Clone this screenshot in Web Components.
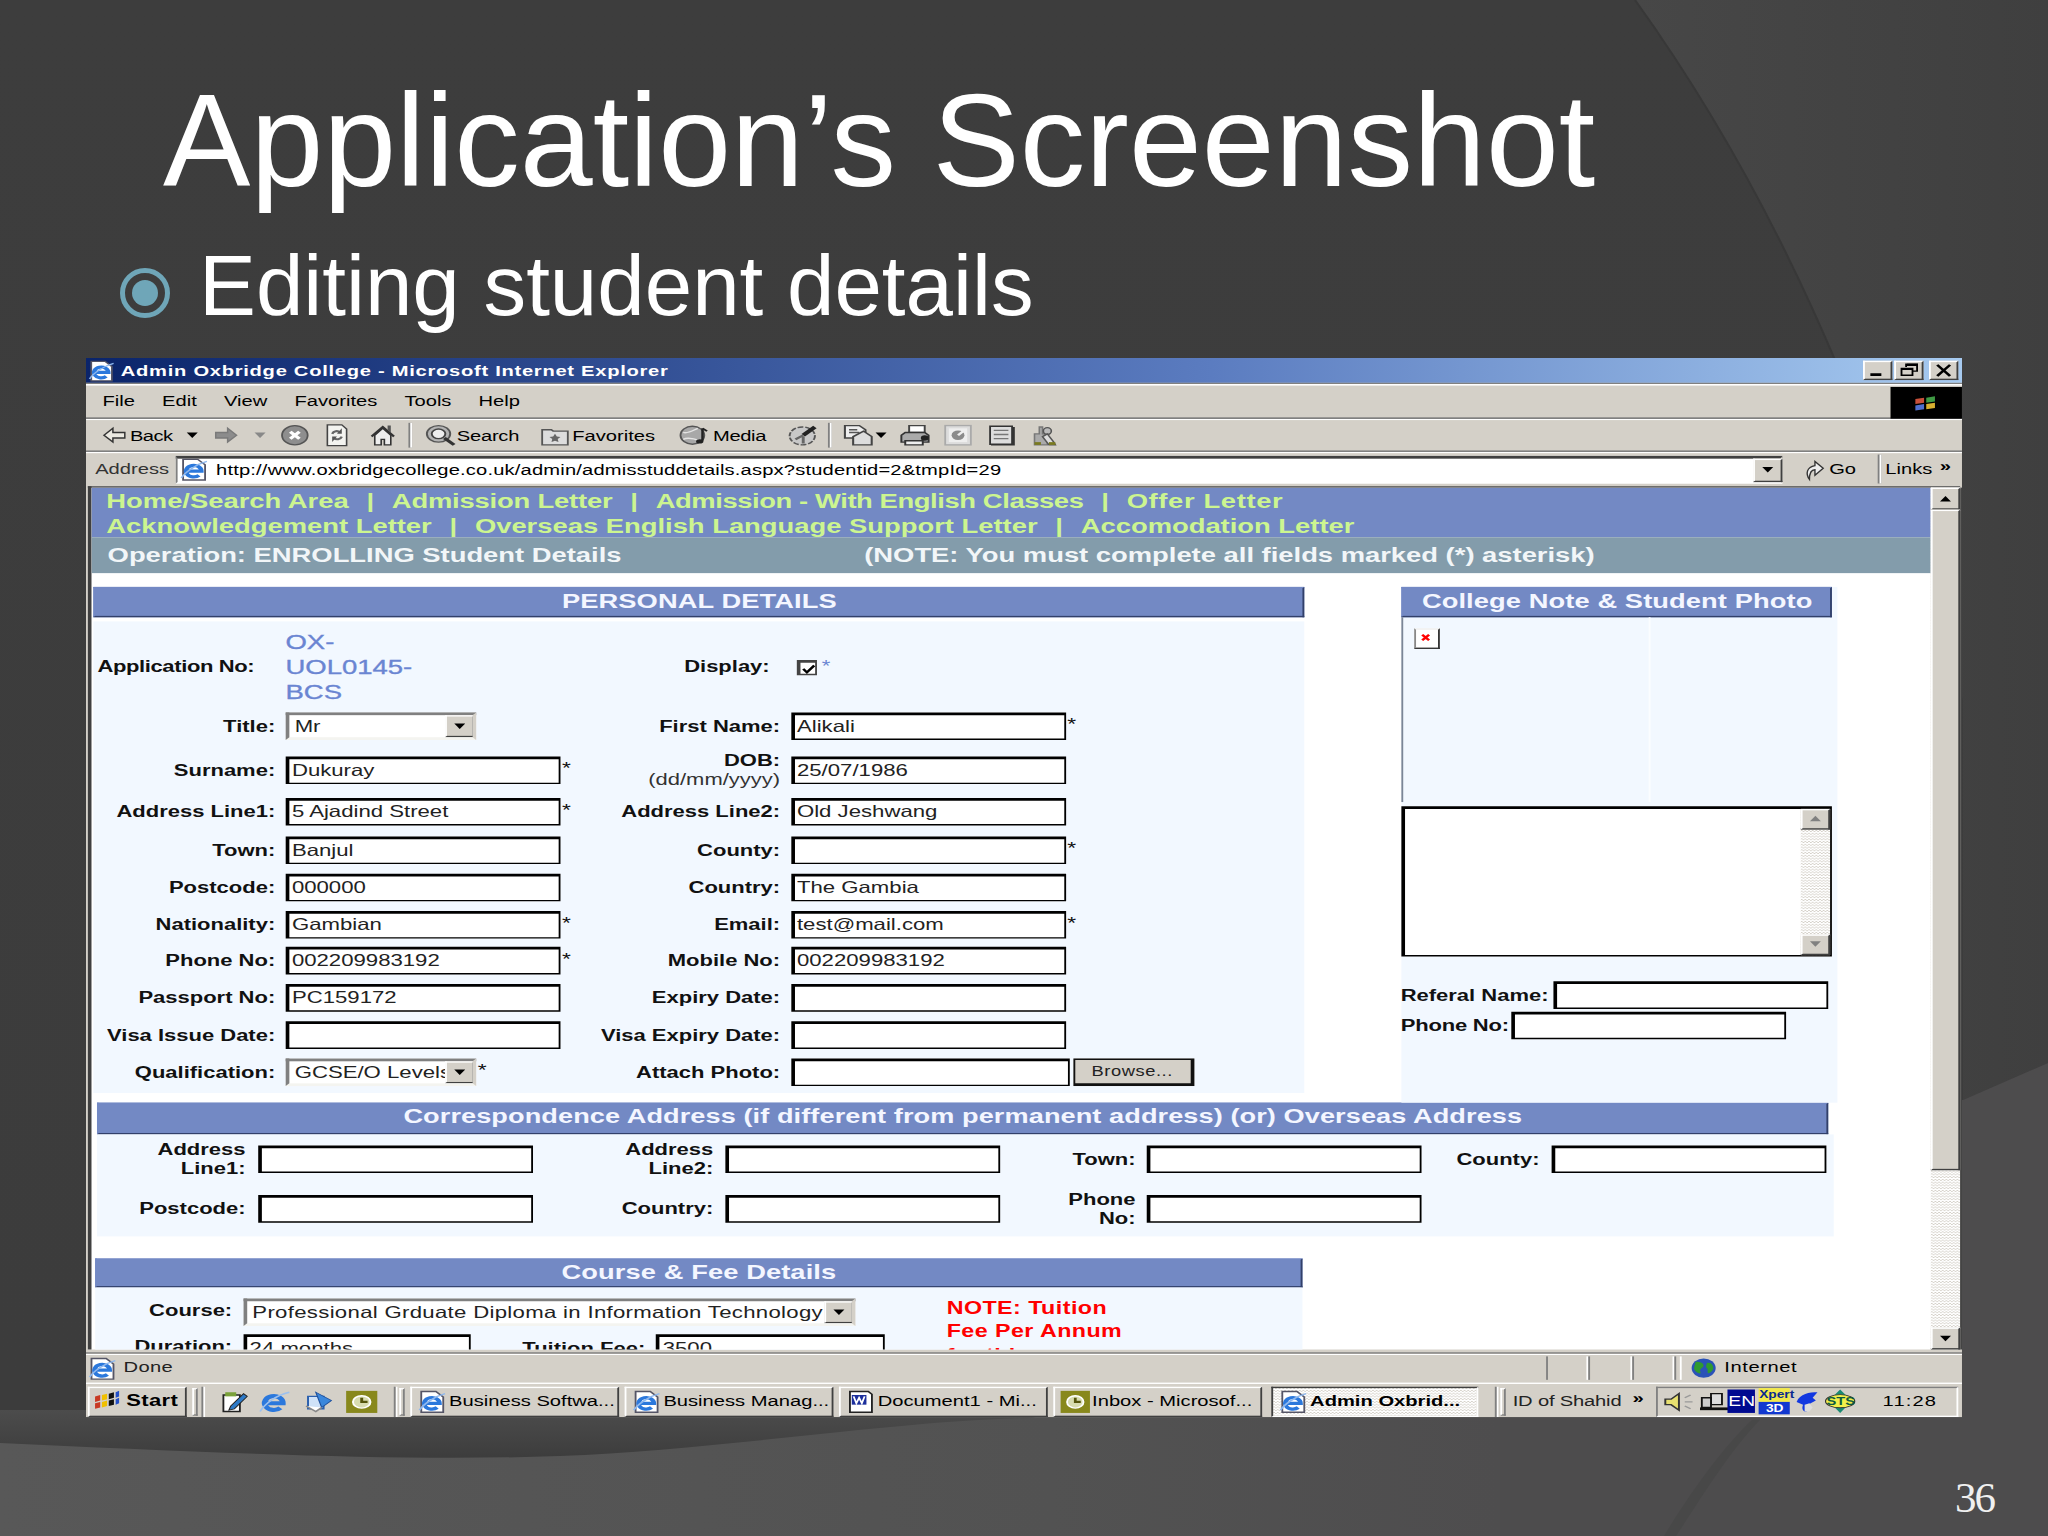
<!DOCTYPE html>
<html lang="en">
<head>
<meta charset="utf-8">
<title>Application's Screenshot</title>
<style>
html, body { margin: 0; padding: 0; width: 2048px; height: 1536px; overflow: hidden; background: #3e3e3e; }
</style>
</head>
<body>
<app-slide>
  <span slot="heading">Application’s Screenshot</span>
  <span slot="bullet">Editing student details</span>
  <span slot="page">36</span>
  <ie-window>
    <admin-form></admin-form>
  </ie-window>
</app-slide>

<script>
const ICONS = {
  page: `<path d="M2 .5h8l4 4v11H2z" fill="#fff" stroke="#556"/>`,
  ie: `<path d="M3.500 9h8.500a4.200 4.200 0 1 0-1.300 3.100" fill="none" stroke="#2b78dc" stroke-width="2.400"/><path d="M1 14C3 10 9 4 15 2" fill="none" stroke="#8fb8ee" stroke-width="1"/>`,
  back: `<path d="M1 8l6-5v3h8v4H7v3z" fill="#ebe9e1" stroke="#333"/>`,
  forward: `<path d="M15 8L9 3v3H1v4h8v3z" fill="#8c8c8c" stroke="#7a7a7a"/>`,
  stop: `<circle cx="8" cy="8" r="7" fill="#8e8e8e" stroke="#555"/><path d="M5.500 5.500l5 5m0-5l-5 5" stroke="#fff" stroke-width="2"/>`,
  refresh: `<path d="M2 .5h9l3 3v12H2z" fill="#f4f4f0" stroke="#444"/><path d="M5 7a3 3 0 0 1 5-1M11 9a3 3 0 0 1-5 1" stroke="#666" stroke-width="1.500" fill="none"/><path d="M11 3v4H8zM5 13V9h3z" fill="#555"/>`,
  home: `<path d="M3 8v7h4v-4h2v4h4V8L8 3z" fill="#eee" stroke="#333"/><path d="M1 9l7-7 7 7" stroke="#333" fill="none" stroke-width="1.500"/><path d="M11 1h2v5l-2-2z" fill="#555"/>`,
  search: `<circle cx="7" cy="7" r="6" fill="#b4b4b4" stroke="#555"/><circle cx="7" cy="7" r="3.500" fill="#eee" stroke="#444"/><path d="M10 10l5 5" stroke="#333" stroke-width="2"/>`,
  fav: `<path d="M1 4h5l1 1h8v10H1z" fill="#ddd" stroke="#555"/><path d="M8 7l1 2 2 .3-1.500 1.500.4 2.200L8 12l-1.900 1 .4-2.200L5 9.300 7 9z" fill="#666"/>`,
  media: `<circle cx="7" cy="8" r="6.500" fill="#a8a8a8" stroke="#555"/><path d="M2 6c3 1 6-2 8-3M2 11c3-2 7 0 9 1" stroke="#e4e4e4" fill="none"/><path d="M12.500 3v9M12.500 3l2.500 2" stroke="#222" stroke-width="1.300"/><ellipse cx="11" cy="12.500" rx="2" ry="1.500" fill="#222"/>`,
  history: `<circle cx="7.500" cy="8.500" r="6.500" fill="#c8c8c8" stroke="#555" stroke-dasharray="3 1"/><path d="M8 8l6-6" stroke="#222" stroke-width="2.500"/><path d="M8 8l-4 3M8 9v5" stroke="#666" stroke-width="1.500"/>`,
  mail: `<path d="M2 1h7l3 3v6H2z" fill="#eee" stroke="#444"/><path d="M4 4h4M4 6h5" stroke="#555"/><path d="M6 9l5-4 4 4v6H6z" fill="#ddd" stroke="#444"/>`,
  print: `<path d="M5 1h8v5H5z" fill="#fff" stroke="#444"/><path d="M1 8l2-2h10l2 2v5H1z" fill="#aaa" stroke="#333"/><path d="M3 12h9v3H3z" fill="#eee" stroke="#333"/><circle cx="13" cy="10" r="2" fill="#222"/>`,
  edit: `<rect x="1" y="1" width="14" height="14" fill="#dcdcdc" stroke="#aaa"/><rect x="3" y="3" width="10" height="10" fill="#eee"/><circle cx="8" cy="8" r="3.500" fill="#8a8a8a"/><path d="M8 8l3-3" stroke="#eee" stroke-width="1.500"/>`,
  discuss: `<path d="M1.500 1.500h12v13h-12z" fill="#ddd" stroke="#333"/><path d="M3.500 4.500h8M3.500 7.500h8M3.500 10.500h8" stroke="#777"/><path d="M14.500 2v13H2" stroke="#333" fill="none"/>`,
  messenger: `<path d="M2 15V7h3V2h2v5h3v8z" fill="#aaa" stroke="#777"/><circle cx="10" cy="5" r="2.500" fill="#bbb" stroke="#555"/><path d="M7 9l3-2 4 6 1 2h-4z" fill="#ddd" stroke="#555"/><path d="M2 14h4" stroke="#7a7a20" stroke-width="2"/><path d="M11 14h4" stroke="#7a7a20" stroke-width="2"/>`,
  go: `<path d="M5 15C2 11 3 6 9 5V2l6 5-6 5V8C6 8 5 11 5 15z" fill="#eee" stroke="#333"/>`,
  globe: `<circle cx="8" cy="8" r="7.500" fill="#2a52b8"/><path d="M3 3c3 0 5 1 5 3S5 8 6 11s-4 0-4-3zM10 4c3-1 4 2 4 4s-2 4-3 4 0-3-1-4 0-3 0-4z" fill="#2f9a2f"/>`,
  flag: `<path d="M1 4l3-1v4l-3 1zM1 9l3-1v4l-3 1z" fill="#c83a24"/><path d="M5 3l3-1v4L5 7zM5 8l3-1v4l-3 1z" fill="#f0c000"/><path d="M9 2l3-1v4L9 6zM9 7l3-1v4l-3 1z" fill="#111"/><path d="M13 1l2-1v4l-2 1zM13 6l2-1v4l-2 1z" fill="#2450c8"/>`,
  msflag: `<path d="M3 5l4-1v4l-4 1z" fill="#c8503a"/><path d="M8 4l4-1v4L8 8z" fill="#3f9a44"/><path d="M3 10l4-1v4l-4 1z" fill="#4f6fd0"/><path d="M8 9l4-1v4l-4 1z" fill="#d8b030"/>`,
  quick: `<path d="M2 3h9v12H2z" fill="#fff" stroke="#222"/><path d="M6 11l7-9 2 2-7 9-3 1z" fill="#2d7ac8" stroke="#222" stroke-width=".6"/><path d="M3 1h6v3H3z" fill="#7aa23a"/>`,
  bare_ie: `<path d="M2.500 9h10a5 5 0 1 0-1.400 3.300" fill="none" stroke="#2b78dc" stroke-width="3"/><path d="M0 15C3 9 9 3 16 1" fill="none" stroke="#9cc0ee"/>`,
  desk: `<path d="M3 4h8v9H3z" fill="#cfe2f8" stroke="#2a5fae"/><path d="M7 1l8 6-5 5z" fill="#3a87dc" stroke="#1d4f9c" stroke-width=".6"/><path d="M2 11l5 4 3-3" fill="#fff" stroke="#888"/>`,
  outlook: `<rect width="16" height="16" fill="#88881c"/><circle cx="8" cy="8" r="4.500" fill="#d8dcb0" stroke="#fff"/><path d="M8 5v3h3" stroke="#55550c" fill="none" stroke-width="1.500"/>`,
  word: `<path d="M2 .5h10l2 2v13H2z" fill="#fff" stroke="#222"/><rect x="3" y="3" width="8" height="7" fill="#1c2f9c"/><path d="M4 4l1.500 5L7 5l1.500 4L10 4" stroke="#fff" fill="none"/>`,
  speaker: `<path d="M1 6h3l4-4v12l-4-4H1z" fill="#e8e070" stroke="#333"/><path d="M11 5l3-2M11 8h4M11 11l3 2" stroke="#999"/>`,
  network: `<path d="M6 2h6v8H6z" fill="#ddd" stroke="#111"/><path d="M1 5h5v7H1z" fill="#ccc" stroke="#111"/><path d="M0 13h16" stroke="#111" stroke-width="2"/>`,
  bluebird: `<path d="M2 8c2-6 8-7 13-7l-3 4 2 2-5 3c1 2 1 4-1 5-2 0-3-2-2-5z" fill="#1238e0"/><path d="M7 10l3-1 2 3-2 3H7z" fill="#ddd"/>`,
  stars: `<path d="M8 0l3 4H5zM8 16l-3-4h6z" fill="#1a8a72"/><ellipse cx="8" cy="8" rx="7.500" ry="4.500" fill="#f2f04a" stroke="#333" stroke-width=".6"/>`,
  broken: `<path d="M4.500 4.500l5 5m0-5l-5 5" stroke="#f00" stroke-width="2"/>`
};

// small helper, every element below is the same shadow root + template routine
function define(tag, css, html) {
  const template = document.createElement('template');
  template.innerHTML = `<style>${css}</style>${html}`;
  customElements.define(tag, class extends HTMLElement {
    constructor() {
      super();
      this.attachShadow({mode: 'open'});
      this.shadowRoot.appendChild(template.content.cloneNode(true));
    }
    connectedCallback() {
      const name = this.getAttribute('name');
      const svg = this.shadowRoot.querySelector('svg[data-icon]');
      if (svg && name) svg.innerHTML = ICONS[name];
      const w = this.getAttribute('w');
      if (w) this.style.width = w + 'px';
      const x = this.getAttribute('x');
      if (x) this.style.marginLeft = x + 'px';
    }
  });
}

define('x-icon', `
  :host { display: inline-block; width: 16px; height: 16px; flex: none; }
  svg { display: block; width: 100%; height: 100%; overflow: visible; }
`, `<svg data-icon viewBox="0 0 16 16" preserveAspectRatio="none"></svg>`);

define('ie-glyph', `
  :host { display: inline-block; width: 16px; height: 16px; flex: none; position: relative; }
  x-icon { position: absolute; inset: 0; width: 100%; height: 100%; }
`, `<x-icon name="page"></x-icon><x-icon name="ie"></x-icon>`);

define('down-arrow', `
  :host { display: inline-block; flex: none; width: 0; height: 0; border: 3.500px solid transparent; border-top: 4px solid #000; border-bottom: 0; }
`, ``);

define('app-slide', `
  :host {
    display: flex; flex-direction: column; position: relative; width: 2048px; height: 1536px; overflow: hidden;
    font-family: "Liberation Sans", Arial, sans-serif; color: #fff;
    background: linear-gradient(#3d3d3d, #3c3c3c 90%, #3c3c3c);
  }
  .decor { position: absolute; inset: 0; width: 2048px; height: 1536px; }
  header { position: relative; padding: 75px 0 0 163px; font-size: 131px; line-height: 131px; white-space: nowrap; }
  .bullet { position: relative; display: flex; align-items: center; gap: 29px; padding: 35.500px 0 28.500px 120px; font-size: 85.300px; line-height: 88px; white-space: nowrap; }
  .bullet svg { width: 50px; height: 50px; margin-top: 14px; flex: none; }
  .body { position: relative; padding-left: 86px; }
  footer { position: relative; margin-top: 59px; padding-right: 54px; text-align: right; font: 43px/43px "Liberation Serif", "Times New Roman", serif; letter-spacing: -2px; color: #f0f0f0; }
`, `
  <svg class="decor" viewBox="0 0 2048 1536">
    <defs>
      <linearGradient id="tr" x1="0" x2="1" y1="0" y2="0"><stop offset="0" stop-color="#474747"/><stop offset="1" stop-color="#3f3f3f"/></linearGradient>
      <linearGradient id="bt" x1="0" x2="1" y1="0" y2="0"><stop offset="0" stop-color="#585858"/><stop offset=".7" stop-color="#525252"/><stop offset="1" stop-color="#4e4d4e"/></linearGradient>
      <linearGradient id="sh" x1="0" x2="0" y1="0" y2="1"><stop offset="0" stop-color="#4c4c4c"/><stop offset="1" stop-color="#3a3a3a"/></linearGradient>
    </defs>
    <path d="M1635 0Q1750 160 1835 360L1963 700V1100L2048 1063V0z" fill="url(#tr)"/>
    <path d="M1635 0Q1750 160 1835 360" fill="none" stroke="#383838" stroke-width="2"/>
    <rect x="0" y="1410" width="1100" height="56" fill="url(#sh)"/>
    <path d="M1963 1100L2048 1063V1536H1500V1100z" fill="#4d4c4d"/>
    <path d="M0 1443C200 1452 400 1462 560 1456C720 1450 900 1420 1032 1418L1500 1300V1536H0z" fill="url(#bt)"/>
    <path d="M1760 1420C1730 1450 1700 1500 1676 1536H1664C1692 1490 1725 1445 1752 1420z" fill="#484848"/>
  </svg>
  <header><slot name="heading"></slot></header>
  <div class="bullet">
    <svg viewBox="0 0 50 50"><circle cx="25" cy="25" r="22.500" fill="none" stroke="#6fa6b8" stroke-width="5"/><circle cx="25" cy="25" r="13" fill="#6fa6b8"/></svg>
    <span><slot name="bullet"></slot></span>
  </div>
  <div class="body"><slot></slot></div>
  <footer><slot name="page"></slot></footer>
`);

define('tool-button', `
  :host { display: inline-flex; align-items: center; gap: 2px; flex: none; font-size: 11px; color: #000; }
`, `<slot></slot>`);

define('ie-window', `
  :host {
    display: block; width: 1024px; height: 768px; margin-bottom: 291px;
    transform: scale(1.832, 1.379); transform-origin: 0 0;
    background: #d4d0c8; overflow: hidden;
    font: 11px/13px "Liberation Sans", Arial, sans-serif; color: #000;
  }
  .title { height: 18px; display: flex; align-items: center; padding: 0 2px 0 1px; color: #fff; font-weight: bold; letter-spacing: .39px;
    background: linear-gradient(90deg, #0a246a, #5b7cc0 60%, #a6caf0); }
  .title ie-glyph { width: 15px; height: 15px; margin-right: 3px; }
  .title .caption { flex: 1; }
  .winbtn { width: 16px; height: 14px; margin-left: 1px; box-sizing: border-box; background: #d4d0c8;
    border: 1px solid; border-color: #fff #404040 #404040 #fff; }
  .winbtn svg { display: block; width: 100%; height: 100%; }
  .rule { height: 2px; background: linear-gradient(#808080 50%, #fff 50%); }
  .menubar { height: 22px; margin-top: 1px; display: flex; align-items: center; padding-left: 9px; gap: 14.800px; position: relative; }
  .menubar span { margin-bottom: 1px; }
  .menubar .flag { margin-left: auto; width: 39px; height: 23px; background: #000; display: flex; align-items: center; justify-content: center; }
  .menubar .flag x-icon { width: 19px; height: 15px; }
  .toolbar { height: 22px; display: flex; align-items: center; position: relative; }
  .tsep { width: 1px; height: 18px; background: #808080; border-right: 1px solid #fff; flex: none; }
  .address { height: 23px; display: flex; align-items: center; }
  .address .lbl { margin-left: 5px; width: 44px; color: #333; }
  .field { flex: none; width: 877px; height: 20px; box-sizing: border-box; display: flex; align-items: center; background: #fff;
    border: 1px solid; border-color: #404040 #d4d0c8 #fff #808080; border-top-width: 2px; padding-left: 1px; letter-spacing: .09px; white-space: nowrap; }
  .field span { flex: 1; padding-left: 4px; }
  .combo { width: 16px; height: 17px; margin-right: -1px; box-sizing: border-box; background: #d4d0c8; border: 1px solid; border-color: #fff #404040 #404040 #fff;
    display: flex; align-items: center; justify-content: center; }
  .view { height: 626px; display: flex; border-top: 1px solid #404040; border-left: 2px solid #404040; margin-top: 1px; box-sizing: border-box; margin-left: 1px; margin-right: 1px; background: #fff; }
  .view .page { width: 1004px; overflow: hidden; flex: none; }
  .scroll { flex: none; display: flex; flex-direction: column; border-right: 1px solid #404040; box-sizing: border-box; width: 17px;
    background: conic-gradient(#d4d0c8 25%, #fff 0 50%, #d4d0c8 0 75%, #fff 0) 0 0 / 2px 2px; }
  .sbtn { height: 16px; flex: none; box-sizing: border-box; background: #d4d0c8; border: 1px solid; border-color: #fff #404040 #404040 #fff; display: flex; align-items: center; justify-content: center; }
  .up { transform: rotate(180deg); }
  .thumb { height: 479px; box-sizing: border-box; background: #d4d0c8; border: 1px solid; border-color: #fff #404040 #404040 #fff; }
  .sfill { flex: 1; }
  .status { height: 21px; margin-top: 2px; display: flex; align-items: center; border-top: 1px solid #808080; box-shadow: inset 0 1px #fff; letter-spacing: .2px; }
  .status span { margin-bottom: 2px; }
  .status ie-glyph { margin: 0 3.500px 0 1px; }
  .status .done { width: 768px; color: #222; }
  .scell { width: 23.600px; height: 17px; flex: none; border-left: 1px solid #808080; border-right: 1px solid #fff; box-sizing: border-box; }
  .status .zone { display: flex; align-items: center; gap: 4px; margin-left: 5px; letter-spacing: .3px; }
  .status .zone x-icon { width: 14px; height: 15px; }
  .taskbar { height: 26px; display: flex; align-items: center; border-top: 1px solid #fff; box-sizing: border-box; }
  .tbtn { flex: none; height: 22px; box-sizing: border-box; display: flex; align-items: center; gap: 1px; padding-left: 3px; background: #d4d0c8;
    border: 1px solid; border-color: #fff #404040 #404040 #fff; white-space: nowrap; overflow: hidden; }
  .tbtn.on { font-weight: bold; border-color: #404040 #fff #fff #404040; background: conic-gradient(#d4d0c8 25%, #fff 0 50%, #d4d0c8 0 75%, #fff 0) 0 0 / 2px 2px; }
  .start { font-weight: bold; font-size: 12px; letter-spacing: .2px; padding-left: 2px; gap: 3px; }
  .grip { flex: none; width: 3px; height: 20px; border: 1px solid; border-color: #fff #808080 #808080 #fff; box-sizing: border-box; }
  .psep { flex: none; width: 2px; height: 22px; border-left: 1px solid #808080; border-right: 1px solid #fff; box-sizing: border-box; }
  .tray { margin-left: 7px; width: 165px; height: 22px; box-sizing: border-box; flex: none; display: flex; align-items: center; border: 1px solid; border-color: #808080 #fff #fff #808080; padding-left: 3px; }
  .en { width: 15px; height: 17px; background: #000a90; color: #fff; display: flex; align-items: center; justify-content: center; font-size: 10.500px; }
  .xp { width: 17px; height: 19px; display: flex; flex-direction: column; font: bold 7.500px/9px "Liberation Sans", sans-serif; text-align: center; }
  .xp b { height: 10px; background: #f2e84a; color: #0a2a90; }
  .xp i { height: 9px; font-style: normal; background: #1238d0; color: #fff; }
  .stsbox { position: relative; width: 17px; height: 17px; font: bold 8px/17px "Liberation Sans", sans-serif; text-align: center; color: #0c5a40; }
  .stsbox x-icon { position: absolute; inset: 0; width: 100%; height: 100%; }
  .stsbox span { position: relative; }
`, `
  <div class="title">
    <ie-glyph></ie-glyph><span class="caption">Admin Oxbridge College - Microsoft Internet Explorer</span>
    <div class="winbtn"><svg viewBox="0 0 14 12"><path d="M3 9h6" stroke="#000" stroke-width="2"/></svg></div>
    <div class="winbtn"><svg viewBox="0 0 14 12"><path d="M5.500 3.500V1.500h6v5h-2M3 4.500h6v5H3z" fill="none" stroke="#000"/><path d="M3 5h6M6 2h6" stroke="#000" stroke-width="1.500"/></svg></div>
    <div class="winbtn" style="margin-left:3px"><svg viewBox="0 0 14 12"><path d="M3.500 2l7 8m0-8l-7 8" stroke="#000" stroke-width="1.600"/></svg></div>
  </div>
  <div class="rule"></div>
  <div class="menubar">
    <span>File</span><span>Edit</span><span>View</span><span>Favorites</span><span>Tools</span><span>Help</span>
    <div class="flag"><x-icon name="msflag"></x-icon></div>
  </div>
  <div class="rule"></div>
  <div class="toolbar">
    <x-icon name="back" x="9" w="13"></x-icon>
    <tool-button x="2" style="margin-right:-1px;letter-spacing:-.3px">Back</tool-button>
    <down-arrow x="9"></down-arrow>
    <x-icon name="forward" x="9" w="13"></x-icon>
    <down-arrow x="9" style="border-top-color:#888"></down-arrow>
    <x-icon name="stop" x="7.700"></x-icon>
    <x-icon name="refresh" x="8" w="14"></x-icon>
    <x-icon name="home" x="11.400" w="14"></x-icon>
    <div class="tsep" style="margin-left:7px"></div>
    <x-icon name="search" x="6.500" w="17"></x-icon>
    <tool-button x=".6" style="letter-spacing:-.15px">Search</tool-button>
    <x-icon name="fav" x="12" w="16"></x-icon>
    <tool-button x="1">Favorites</tool-button>
    <x-icon name="media" x="13.300"></x-icon>
    <tool-button x="2.300" style="letter-spacing:-.2px">Media</tool-button>
    <x-icon name="history" x="11.300" w="17"></x-icon>
    <div class="tsep" style="margin-left:5px"></div>
    <x-icon name="mail" x="5" w="18"></x-icon>
    <down-arrow x="1"></down-arrow>
    <x-icon name="print" x="7" w="17"></x-icon>
    <x-icon name="edit" x="7"></x-icon>
    <x-icon name="discuss" x="8.700"></x-icon>
    <x-icon name="messenger" x="8" w="14"></x-icon>
  </div>
  <div class="rule"></div>
  <div class="address">
    <span class="lbl">Address</span>
    <div class="field"><ie-glyph></ie-glyph><span>http://www.oxbridgecollege.co.uk/admin/admisstuddetails.aspx?studentid=2&amp;tmpId=29</span><div class="combo"><down-arrow></down-arrow></div></div>
    <x-icon name="go" x="11" w="12"></x-icon>
    <tool-button x="2.500">Go</tool-button>
    <div class="tsep" style="margin-left:12px;height:21px"></div>
    <tool-button x="2">Links</tool-button>
    <b style="margin:-5px 0 0 4px">»</b>
  </div>
  <div class="view">
    <div class="page"><slot></slot></div>
    <div class="scroll">
      <div class="sbtn"><down-arrow class="up"></down-arrow></div>
      <div class="thumb"></div>
      <div class="sfill"></div>
      <div class="sbtn"><down-arrow></down-arrow></div>
    </div>
  </div>
  <div class="status">
    <ie-glyph></ie-glyph><span class="done">Done</span>
    <div class="scell" style="margin-left:8px"></div><div class="scell"></div><div class="scell"></div><div class="scell" style="width:4px"></div>
    <div class="zone"><x-icon name="globe"></x-icon><span>Internet</span></div>
  </div>
  <div class="taskbar">
    <div class="tbtn start" style="margin-left:1px;width:54px"><x-icon name="flag" w="15"></x-icon>Start</div>
    <div class="grip" style="margin-left:3px"></div><div class="psep" style="margin-left:2px"></div>
    <x-icon name="quick" x="8" w="16"></x-icon>
    <x-icon name="bare_ie" x="6.400" w="16"></x-icon>
    <x-icon name="desk" x="7" w="17"></x-icon>
    <x-icon name="outlook" x="6.400" w="17"></x-icon>
    <div class="psep" style="margin-left:9px"></div><div class="grip" style="margin-left:1px"></div>
    <div class="tbtn" style="margin-left:3.400px;width:114px"><ie-glyph></ie-glyph>Business Softwa...</div>
    <div class="tbtn" style="margin-left:3px;width:114px"><ie-glyph></ie-glyph>Business Manag...</div>
    <div class="tbtn" style="margin-left:3px;width:114px"><x-icon name="word"></x-icon>Document1 - Mi...</div>
    <div class="tbtn" style="margin-left:3px;width:114px"><x-icon name="outlook"></x-icon>Inbox - Microsof...</div>
    <div class="tbtn on" style="margin-left:5px;width:113px"><ie-glyph></ie-glyph>Admin Oxbrid...</div>
    <div class="psep" style="margin-left:9px"></div><div class="grip" style="margin-left:1px"></div>
    <span style="margin-left:3.600px;flex:none;width:63.400px;white-space:nowrap;letter-spacing:-.1px;color:#222">ID of Shahid</span>
    <b style="margin:-4px 0 0 2px">»</b>
    <div class="tray">
      <x-icon name="speaker" w="17"></x-icon>
      <x-icon name="network" x="3"></x-icon>
      <div class="en" style="margin-left:-1px">EN</div>
      <div class="xp" style="margin-left:2px"><b>Xpert</b><i>3D</i></div>
      <x-icon name="bluebird" x="2" w="14"></x-icon>
      <div class="stsbox" style="margin-left:3px"><x-icon name="stars"></x-icon><span>STS</span></div>
      <span style="margin-left:14.400px;letter-spacing:.6px">11:28</span>
    </div>
  </div>
`);

define('section-bar', `
  :host { display: block; height: 22px; box-sizing: border-box; padding-bottom: 3px; background: #7389c4; border: 1px solid #7389c4; border-bottom-color: #32406a; border-right-color: #32406a;
    color: #f4f6ff; font: bold 14.900px/19px "Liberation Sans", Arial, sans-serif; letter-spacing: .05px; text-align: center; white-space: nowrap; }
`, `<slot></slot>`);

define('text-box', `
  :host { display: block; width: 150px; height: 20px; box-sizing: border-box; background: #fff; border: 2px solid #000; border-width: 2px 1px 1px 2px;
    padding-left: 1.500px; font: 12.100px/17.500px "Liberation Sans", Arial, sans-serif; color: #222; white-space: nowrap; overflow: hidden; flex: none; }
`, `<slot></slot>`);

define('drop-down', `
  :host { display: flex; width: 104px; height: 20px; box-sizing: border-box; background: #fff; border: 2px solid; border-color: #808080 #d4d0c8 #f4f4f0 #808080;
    font: 12.100px/16px "Liberation Sans", Arial, sans-serif; color: #222; white-space: nowrap; overflow: hidden; flex: none; }
  .txt { flex: 1; padding-left: 3px; overflow: hidden; }
  .btn { width: 16px; flex: none; margin: 0 -1px; box-sizing: border-box; background: #d4d0c8; border: 1px solid; border-color: #fff #404040 #404040 #fff; display: flex; align-items: center; justify-content: center; }
`, `<div class="txt"><slot></slot></div><div class="btn"><down-arrow></down-arrow></div>`);

define('mini-textarea', `
  :host { display: flex; justify-content: flex-end; height: 109px; box-sizing: border-box; background: #fff; border: 2px solid #000; border-width: 2px 1px 1px 2px; }
  .bar { width: 16px; display: flex; flex-direction: column; background: conic-gradient(#d4d0c8 25%, #fff 0 50%, #d4d0c8 0 75%, #fff 0) 0 0 / 2px 2px; }
  .b { height: 15px; box-sizing: border-box; background: #d4d0c8; border: 1px solid; border-color: #fff #404040 #404040 #fff; display: flex; align-items: center; justify-content: center; }
  .sp { flex: 1; }
  down-arrow { border-top-color: #808080; }
  .up { transform: rotate(180deg); }
`, `<div class="bar"><div class="b"><down-arrow class="up"></down-arrow></div><div class="sp"></div><div class="b"><down-arrow></down-arrow></div></div>`);

const personal = [
  ['Title:', 'sel:Mr', '', 'First Name:', 'Alikali', '*'],
  ['Surname:', 'Dukuray', '*', 'DOB:<br><span class="n">(dd/mm/yyyy)</span>', '25/07/1986', ''],
  ['Address Line1:', '5 Ajadind Street', '*', 'Address Line2:', 'Old Jeshwang', ''],
  ['Town:', 'Banjul', '', 'County:', '', '*'],
  ['Postcode:', '000000', '', 'Country:', 'The Gambia', ''],
  ['Nationality:', 'Gambian', '*', 'Email:', 'test@mail.com', '*'],
  ['Phone No:', '002209983192', '*', 'Mobile No:', '002209983192', ''],
  ['Passport No:', 'PC159172', '', 'Expiry Date:', '', ''],
  ['Visa Issue Date:', '', '', 'Visa Expiry Date:', '', '']
];
const field = (v, star) => (v.startsWith('sel:') ? `<drop-down>${v.slice(4)}</drop-down>` : `<text-box>${v}</text-box>`) + (star ? `<span class="star">*</span>` : '');
const personalRows = personal.map(r => `
  <label>${r[0]}</label><div class="f">${field(r[1], r[2])}</div>
  <label>${r[3]}</label><div class="f">${field(r[4], r[5])}</div>`).join('');

define('admin-form', `
  :host { display: block; font: bold 12px/14px "Liberation Sans", Arial, sans-serif; color: #111; }
  nav { height: 36px; box-sizing: border-box; padding: .6px 0 0 8.100px; background: #7389c4; color: #ccf590; font-size: 14.950px; line-height: 18px; white-space: nowrap; }
  nav i { font-style: normal; margin: 0 9.700px; }
  .op { height: 26px; display: grid; grid-template-columns: 413px 1fr; padding-left: 8.800px; background: #839cab; color: #f2f6f8; font-size: 14.950px; line-height: 26px; white-space: nowrap; align-items: start; }
  .top { display: grid; margin: 10px 0 0 1.300px; width: 952px; grid-template-columns: 661px 53px 238px; }
  .panel { background: #f2f8ff; }
  .personal { margin-top: 2.700px; padding: 4.700px 0 1.200px; display: grid; grid-template-columns: 104.600px 165.700px 110px 1fr; grid-template-rows: 57.500px 29px 33.500px 28px repeat(7, 26.870px); align-items: center; }
  label { text-align: right; padding-right: 5.600px; line-height: 14px; white-space: nowrap; }
  .personal label:nth-of-type(2n) { padding-right: 5.700px; }
  .personal label.app { padding-right: 17px; letter-spacing: -.2px; }
  .personal label.disp { padding-right: 11.400px; }
  .n { font-weight: normal; color: #333; }
  .f { display: flex; align-items: center; }
  .star { font-weight: normal; margin-left: 1px; font-size: 12.400px; line-height: 14px; align-self: flex-start; margin-top: 2px; }
  .appno { font: 15px/18px "Liberation Sans", Arial, sans-serif; color: #6a85d2; width: 70px; -webkit-text-stroke: .25px #6a85d2; }
  .check { width: 11px; height: 11px; box-sizing: border-box; background: #fff; border: 1px solid #444; border-width: 2px 1px 1px 2px; margin-left: 3px; position: relative; }
  .check svg { position: absolute; inset: -1px -1px; width: 11px; height: 11px; }
  .bluestar { color: #6a85d2; font-weight: normal; font-size: 12px; margin: 0 0 0 3px; }
  .file { width: 152px; }
  .browse { width: 66px; height: 20px; box-sizing: border-box; margin-left: 2px; background: #d4d0c8; border: 2px solid #111; border-width: 1px 2px 2px 1px; font: 10px/18px "Liberation Sans", Arial, sans-serif; text-align: center; letter-spacing: .3px; color: #222; }
  .side { grid-column: 3; height: 373.900px; }
  .side section-bar { margin-right: 3px; }
  .photo { height: 134px; display: grid; grid-template-columns: 135px 1fr; border-left: 1px solid #7b8697; box-sizing: border-box; }
  .photo .c { border-right: 1px solid #fbfdff; padding: 8px 0 0 6px; }
  .broken { width: 14px; height: 15px; box-sizing: border-box; background: #fff; border: 1px solid; border-color: #eee #333 #333 #888; }
  .broken x-icon { width: 12px; height: 13px; display: block; }
  mini-textarea { margin: 2.500px 3px 0 0; }
  .refer { display: flex; align-items: center; margin-top: 18.200px; }
  .refer + .refer { margin-top: 2px; }
  .side label { padding-right: 2.600px; margin-left: -.7px; text-align: left; }
  .refer + .refer label { padding-right: 1.500px; letter-spacing: -.1px; }
  .corr-bar { margin: 0 0 0 3.100px; width: 945px; height: 23px; font-size: 14.800px; }
  .corr { margin-left: 3.100px; width: 948px; height: 74px; box-sizing: border-box; padding-top: 8.300px; display: grid; grid-template-columns: 87.500px 150px 105.300px 150px 80.500px 150px 70.500px 150px; grid-template-rows: 20px 20px; row-gap: 16px; align-items: center; }
  .corr label { padding-right: 6.500px; }
  .course-bar { margin: 16px 0 0 2.300px; width: 658.500px; height: 21px; line-height: 18px; }
  .course { margin-left: 2.300px; width: 658.500px; height: 60px; overflow: hidden; box-sizing: border-box; padding-top: 7.700px; display: grid; grid-template-columns: 80.500px 350px 1fr; grid-template-rows: 20px 40px; }
  .course label { padding-right: 6px; line-height: 19px; }
  .course .two { grid-column: 2; display: flex; align-items: center; margin-top: 6.800px; height: 20px; }
  .course .two label { width: 101.400px; box-sizing: border-box; }
  .note { grid-column: 3; grid-row: 1 / 3; color: #f00; font-size: 12.700px; line-height: 17px; width: 108px; margin: -.5px 0 0 34px; letter-spacing: .25px; }
`, `
  <nav>
    <div>Home/Search Area<i>|</i><span style="letter-spacing:-.1px">Admission Letter</span><i>|</i><span style="letter-spacing:-.22px">Admission - With English Classes</span><i>|</i><span style="letter-spacing:.35px">Offer Letter</span></div>
    <div>Acknowledgement Letter<i>|</i>Overseas English Language Support Letter<i>|</i>Accomodation Letter</div>
  </nav>
  <div class="op"><span>Operation: ENROLLING Student Details</span><span>(NOTE: You must complete all fields marked (*) asterisk)</span></div>
  <div class="top">
    <div>
      <section-bar>PERSONAL DETAILS</section-bar>
      <div class="panel personal">
        <label class="app">Application No:</label><div class="appno">OX-<br>UOL0145-<br>BCS</div>
        <label class="disp">Display:</label><div class="f"><div class="check"><svg viewBox="0 0 11 11"><path d="M2.500 5.500l2 2.500 4-5" fill="none" stroke="#000" stroke-width="1.500"/></svg></div><span class="bluestar">*</span></div>
        ${personalRows}
        <label>Qualification:</label><div class="f"><drop-down>GCSE/O Levels</drop-down><span class="star">*</span></div>
        <label>Attach Photo:</label><div class="f"><text-box class="file"></text-box><div class="browse">Browse...</div></div>
      </div>
    </div>
    <div class="side panel">
      <section-bar>College Note &amp; Student Photo</section-bar>
      <div class="photo"><div class="c"><div class="broken"><x-icon name="broken"></x-icon></div></div><div class="e"></div></div>
      <mini-textarea></mini-textarea>
      <div class="refer"><label>Referal Name:</label><text-box></text-box></div>
      <div class="refer"><label>Phone No:</label><text-box></text-box></div>
    </div>
  </div>
  <section-bar class="corr-bar">Correspondence Address (if different from permanent address) (or) Overseas Address</section-bar>
  <div class="panel corr">
    <label>Address<br>Line1:</label><text-box></text-box>
    <label>Address<br>Line2:</label><text-box></text-box>
    <label>Town:</label><text-box></text-box>
    <label>County:</label><text-box></text-box>
    <label>Postcode:</label><text-box></text-box>
    <label>Country:</label><text-box></text-box>
    <label>Phone<br>No:</label><text-box></text-box>
  </div>
  <section-bar class="course-bar">Course &amp; Fee Details</section-bar>
  <div class="panel course">
    <label>Course:</label><drop-down style="width:334px;letter-spacing:.17px">Professional Grduate Diploma in Information Technology</drop-down>
    <div class="note">NOTE: Tuition Fee Per Annum for this</div>
    <label style="margin-top:6.800px">Duration:</label>
    <div class="two"><text-box style="width:124.500px">24 months</text-box><label>Tuition Fee:</label><text-box style="width:124.500px">3500</text-box></div>
  </div>
`);
</script>
</body>
</html>
